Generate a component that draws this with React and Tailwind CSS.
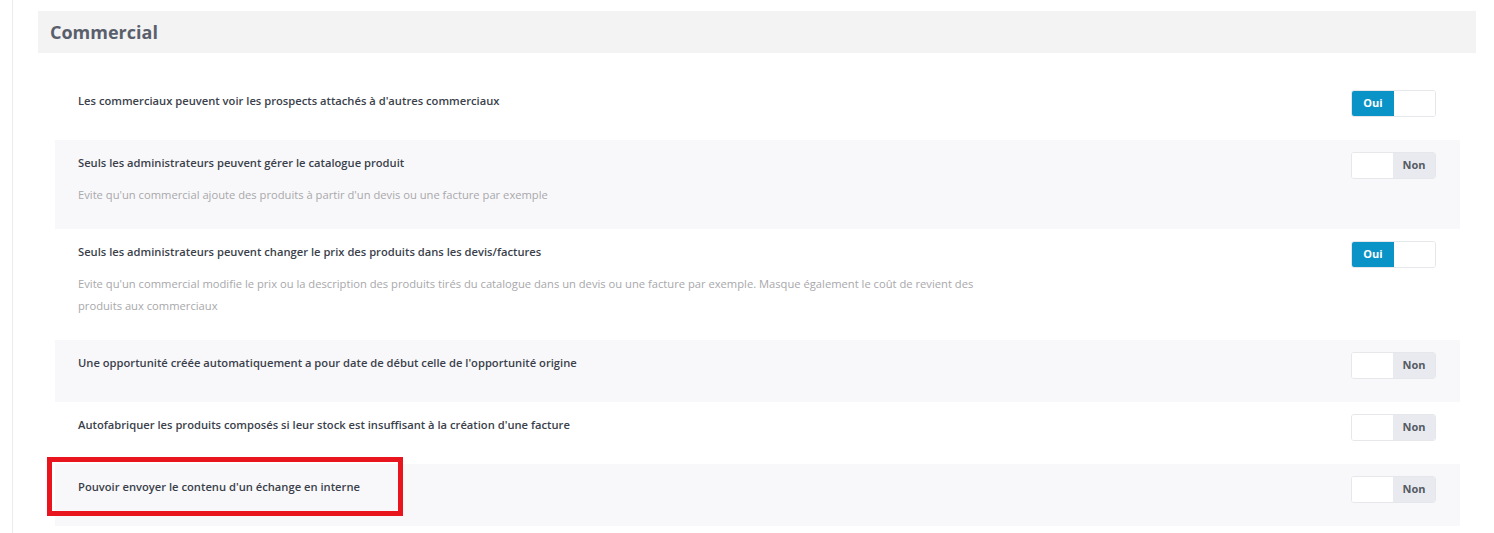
import React from 'react';

const settings = [
  {
    label: "Les commerciaux peuvent voir les prospects attachés à d'autres commerciaux",
    value: true,
  },
  {
    label: 'Seuls les administrateurs peuvent gérer le catalogue produit',
    help: "Evite qu'un commercial ajoute des produits à partir d'un devis ou une facture par exemple",
    value: false,
  },
  {
    label: 'Seuls les administrateurs peuvent changer le prix des produits dans les devis/factures',
    help: "Evite qu'un commercial modifie le prix ou la description des produits tirés du catalogue dans un devis ou une facture par exemple. Masque également le coût de revient des produits aux commerciaux",
    value: true,
  },
  {
    label: "Une opportunité créée automatiquement a pour date de début celle de l'opportunité origine",
    value: false,
  },
  {
    label: "Autofabriquer les produits composés si leur stock est insuffisant à la création d'une facture",
    value: false,
  },
  {
    label: "Pouvoir envoyer le contenu d'un échange en interne",
    value: false,
    highlight: true,
  },
];

function Toggle({ on }) {
  return (
    <div className="flex h-[27px] w-[85px] shrink-0 overflow-hidden rounded-[3px] border border-[#e6e7eb] bg-white text-[11px] font-bold">
      {on ? (
        <>
          <span className="flex w-[42px] items-center justify-center bg-[#0a93c6] text-white">Oui</span>
          <span className="flex-1 bg-white" />
        </>
      ) : (
        <>
          <span className="w-[41px] bg-white" />
          <span className="flex flex-1 items-center justify-center bg-[#e9eaef] text-[#555a63]">Non</span>
        </>
      )}
    </div>
  );
}

export default function App() {
  return (
    <div className="min-h-[533px] bg-white font-['Open_Sans',sans-serif]">
      <div className="ml-[12px] min-h-[533px] border-l border-[#ececec] pl-[25px] pr-[18px] pt-[11px]">
        <div className="flex h-[42px] items-center bg-[#f3f3f4] px-[12px]">
          <h2 className="text-[18px] font-bold text-[#5a5f6c]">Commercial</h2>
        </div>

        <div className="ml-[17px] mr-[16px] mt-[25px]">
          {settings.map((s, i) => (
            <div
              key={i}
              className={`relative flex justify-between pb-[23px] pl-[23px] pr-[24px] pt-[12px] ${i % 2 === 1 ? 'bg-[#f8f8fa]' : 'bg-white'}`}
            >
              <div className="max-w-[900px]">
                <div className="text-[11.2px] font-semibold leading-[22px] text-[#3b3f4b]">{s.label}</div>
                {s.help && (
                  <div className="mt-[10px] text-[11.2px] leading-[22px] text-[#a8a8ab]">{s.help}</div>
                )}
              </div>
              <Toggle on={s.value} />
              {s.highlight && (
                <div className="pointer-events-none absolute left-[-8px] top-[-7px] h-[59px] w-[356px] border-[5px] border-[#e8151f]" />
              )}
            </div>
          ))}
        </div>
      </div>
    </div>
  );
}
